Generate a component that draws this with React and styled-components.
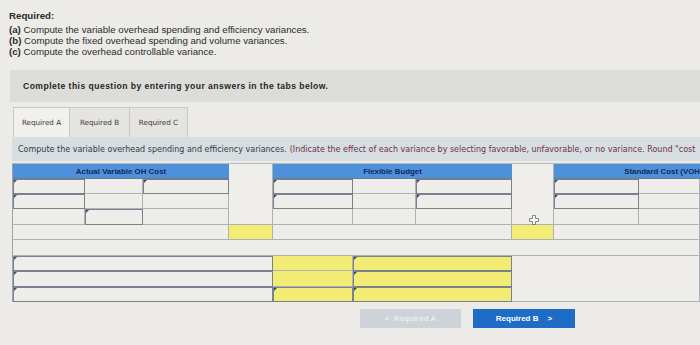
import React from 'react';
import styled, { createGlobalStyle } from 'styled-components';

const GlobalStyle = createGlobalStyle`
  html, body {
    margin: 0;
    padding: 0;
    background: #ecebe7;
  }
  body {
    width: 700px;
    height: 345px;
    overflow: hidden;
    font-family: "Liberation Sans", Arial, sans-serif;
  }
`;

const Page = styled.div`
  width: 700px;
  height: 345px;
  background: #ecebe7;
  color: #2b2b2b;
`;

const Intro = styled.div`
  padding: 10px 0 0 9px;
  font-size: 9.7px;
  line-height: 11px;
  p {
    margin: 0;
  }
  b {
    font-weight: 700;
  }
  .title {
    margin-bottom: 3px;
  }
`;

const Banner = styled.div`
  margin: 13px 0 0 10px;
  height: 32px;
  background: #dcdcd9;
  display: flex;
  align-items: center;
  padding-left: 13px;
  font-size: 8.6px;
  font-weight: 700;
  letter-spacing: 0.45px;
  color: #262626;
`;

const TabBar = styled.div`
  display: flex;
  margin: 5px 0 0 13px;
  height: 30px;
`;

const Tab = styled.div`
  width: ${p => p.$w}px;
  box-sizing: border-box;
  border: 1px solid #c9c9c6;
  border-bottom: none;
  border-left: ${p => (p.$first ? '1px solid #c9c9c6' : 'none')};
  background: ${p => (p.$active ? '#f1f0ed' : '#e5e4e1')};
  display: flex;
  align-items: center;
  justify-content: center;
  font-family: "DejaVu Sans", Verdana, sans-serif;
  font-size: 7.2px;
  color: #3a3a3a;
`;

const Instruction = styled.div`
  margin-left: 12px;
  height: 24px;
  background: #d6dee2;
  display: flex;
  align-items: center;
  padding-left: 6px;
  white-space: nowrap;
  overflow: hidden;
  font-family: "DejaVu Sans", Verdana, sans-serif;
  font-size: 8px;
  color: #3b3b40;
  span {
    color: #6e3443;
    margin-left: 3px;
  }
`;

const Grid = styled.div`
  position: relative;
  margin: 2px 0 0 12px;
  display: grid;
  grid-template-columns: 72px 58px 86px 44px 80px 63px 96px 42px 85px 1fr;
  grid-template-rows: 15px 15px 15px 16px 15px 16px 15px 16px 15px;
  border-left: 1px solid #9fa3a9;
  border-top: 1px solid #b4b7bb;
  box-sizing: border-box;
`;

const Cell = styled.div`
  grid-column: ${p => p.$c};
  grid-row: ${p => p.$r};
  position: relative;
  box-sizing: border-box;
  border-right: 1px solid ${p => (p.$input ? '#7a808c' : '#aeb1b6')};
  border-bottom: 1px solid ${p => (p.$input ? '#7a808c' : '#aeb1b6')};
  background: ${p => (p.$yellow ? '#f2ec74' : p.$gap ? '#efeeea' : '#eeede9')};
  box-shadow: ${p => (p.$input ? 'inset 1px 1px 0 #7a808c' : 'none')};
  &::before {
    content: '';
    display: ${p => (p.$input ? 'block' : 'none')};
    position: absolute;
    left: 1px;
    top: 1px;
    border-top: 3px solid #3a4a70;
    border-right: 3px solid transparent;
  }
`;

const Head = styled.div`
  grid-column: ${p => p.$c};
  grid-row: 1;
  background: #4d91da;
  border-bottom: 1px solid #6f7b8c;
  box-sizing: border-box;
  display: flex;
  align-items: center;
  justify-content: ${p => (p.$right ? 'flex-end' : 'center')};
  overflow: hidden;
  white-space: nowrap;
  font-size: 7.9px;
  font-weight: 700;
  color: #14285a;
`;

const Cursor = styled.svg`
  position: absolute;
  left: 516px;
  top: 51px;
  width: 10px;
  height: 10px;
`;

const Buttons = styled.div`
  display: flex;
  gap: 12px;
  margin: 7px 0 0 360px;
`;

const Button = styled.div`
  width: ${p => p.$w}px;
  height: 19px;
  display: flex;
  align-items: center;
  justify-content: center;
  gap: 9px;
  font-size: 8px;
  font-weight: 700;
  background: ${p => (p.$primary ? '#1f6cc6' : '#cdd3d8')};
  color: ${p => (p.$primary ? '#ffffff' : '#e9edf0')};
`;

export default function App() {
  return (
    <Page>
      <GlobalStyle />
      <Intro>
        <p className="title"><b>Required:</b></p>
        <p><b>(a)</b> Compute the variable overhead spending and efficiency variances.</p>
        <p><b>(b)</b> Compute the fixed overhead spending and volume variances.</p>
        <p><b>(c)</b> Compute the overhead controllable variance.</p>
      </Intro>
      <Banner>Complete this question by entering your answers in the tabs below.</Banner>
      <TabBar>
        <Tab $w={57} $first $active>Required A</Tab>
        <Tab $w={60}>Required B</Tab>
        <Tab $w={58}>Required C</Tab>
      </TabBar>
      <Instruction>
        Compute the variable overhead spending and efficiency variances.
        <span>(Indicate the effect of each variance by selecting favorable, unfavorable, or no variance. Round "cost</span>
      </Instruction>
      <Grid>
        <Head $c="1 / 4">Actual Variable OH Cost</Head>
        <Cell $c="4 / 5" $r="1 / 5" $gap />
        <Head $c="5 / 8">Flexible Budget</Head>
        <Cell $c="8 / 9" $r="1 / 5" $gap />
        <Head $c="9 / 11" $right>Standard Cost (VOH</Head>

        <Cell $c="1" $r="2" $input />
        <Cell $c="2" $r="2" />
        <Cell $c="3" $r="2" $input />
        <Cell $c="5" $r="2" $input />
        <Cell $c="6" $r="2" />
        <Cell $c="7" $r="2" $input />
        <Cell $c="9" $r="2" $input />
        <Cell $c="10" $r="2" />

        <Cell $c="1" $r="3" $input />
        <Cell $c="2" $r="3" />
        <Cell $c="3" $r="3" />
        <Cell $c="5" $r="3" $input />
        <Cell $c="6" $r="3" />
        <Cell $c="7" $r="3" $input />
        <Cell $c="9" $r="3" $input />
        <Cell $c="10" $r="3" />

        <Cell $c="1" $r="4" />
        <Cell $c="2" $r="4" $input />
        <Cell $c="3" $r="4" />
        <Cell $c="5" $r="4" />
        <Cell $c="6" $r="4" />
        <Cell $c="7" $r="4" />
        <Cell $c="9" $r="4" />
        <Cell $c="10" $r="4" />

        <Cell $c="1 / 4" $r="5" />
        <Cell $c="4 / 5" $r="5" $yellow />
        <Cell $c="5 / 8" $r="5" />
        <Cell $c="8 / 9" $r="5" $yellow />
        <Cell $c="9 / 11" $r="5" />

        <Cell $c="1 / 11" $r="6" />

        <Cell $c="1 / 5" $r="7" $input />
        <Cell $c="5" $r="7" $yellow />
        <Cell $c="6 / 8" $r="7" $yellow $input />
        <Cell $c="1 / 5" $r="8" $input />
        <Cell $c="5" $r="8" $yellow />
        <Cell $c="6 / 8" $r="8" $yellow $input />
        <Cell $c="1 / 5" $r="9" $input />
        <Cell $c="5" $r="9" $yellow $input />
        <Cell $c="6 / 8" $r="9" $yellow $input />
        <Cell $c="8 / 11" $r="7 / 10" />

        <Cursor viewBox="0 0 10 10">
          <path
            d="M3.5 0.5h3v3h3v3h-3v3h-3v-3h-3v-3h3z"
            fill="#f7f7f5"
            stroke="#6a6a6a"
            strokeWidth="0.8"
          />
        </Cursor>
      </Grid>
      <Buttons>
        <Button $w={101}>&lt;&nbsp;&nbsp;Required A</Button>
        <Button $w={102} $primary>
          <span>Required B</span>
          <span>&gt;</span>
        </Button>
      </Buttons>
    </Page>
  );
}
